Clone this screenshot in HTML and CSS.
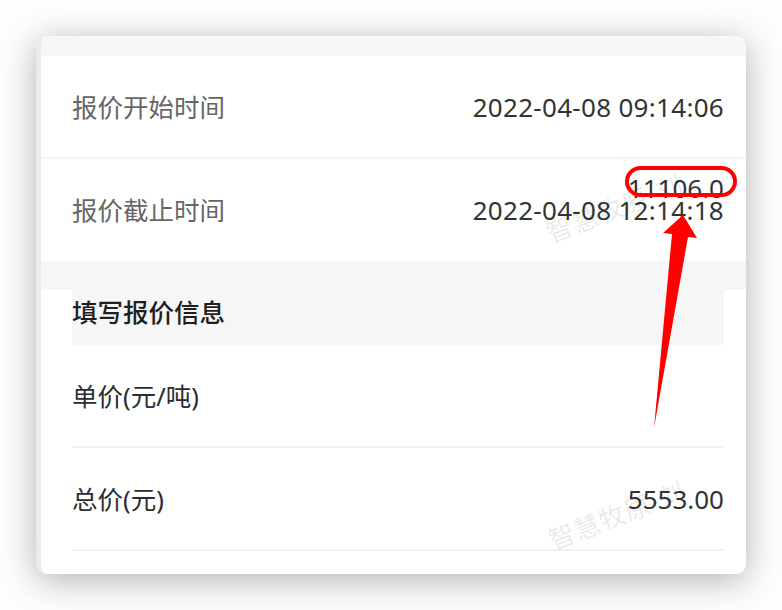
FILE: index.html
```html
<!DOCTYPE html>
<html lang="zh-CN">
<head>
<meta charset="utf-8">
<title>报价</title>
<link rel="stylesheet" href="styles.css">
</head>
<body>
<div class="stage">
  <div class="card">
    <div class="top-strip"></div>
    <div class="row">
      <span class="label muted">报价开始时间</span>
      <span class="value date">2022-04-08 09:14:06</span>
    </div>
    <div class="row row-last">
      <span class="label muted">报价截止时间</span>
      <span class="value date">2022-04-08 12:14:18</span>
      <span class="value overlap">11106.0</span>
    </div>
    <div class="gap"></div>
    <div class="form">
      <div class="form-header">填写报价信息</div>
      <div class="form-row">
        <span class="label">单价(元/吨)</span>
        <span class="value"></span>
      </div>
      <div class="form-row">
        <span class="label">总价(元)</span>
        <span class="value">5553.00</span>
      </div>
    </div>
    <div class="watermark wm-1">智慧牧原-刘</div>
    <div class="watermark wm-2">智慧牧原-刘</div>
  </div>
</div>
<svg class="annotation" width="782" height="610" viewBox="0 0 782 610" xmlns="http://www.w3.org/2000/svg">
  <rect x="627" y="168" width="108" height="27" rx="13.5" ry="13.5" fill="none" stroke="#ff0000" stroke-width="4"/>
  <polygon points="683,215 697,238 688,237 654,428 672,234 663,233" fill="#ff0000"/>
</svg>
</body>
</html>
```
FILE: styles.css
```css
html, body {
  margin: 0;
  padding: 0;
  background: #fdfdfd;
}
body {
  width: 782px;
  height: 610px;
  position: relative;
  overflow: hidden;
  font-family: "Noto Sans", "Noto Sans CJK SC", sans-serif;
}
.stage {
  padding: 36px 36px 0 36px;
}
.card {
  position: relative;
  width: 705px;
  height: 538px;
  background: #fff;
  border-left: 5px solid #ebebeb;
  border-radius: 10px;
  overflow: hidden;
  box-shadow: 0 6px 34px rgba(0, 0, 0, 0.3);
}
.top-strip {
  height: 20px;
  background: #f7f7f7;
}
.row {
  position: relative;
  height: 101px;
  display: flex;
  align-items: center;
  justify-content: space-between;
  padding: 0 22px 0 31px;
  border-bottom: 2px solid #f4f4f4;
}
.row-last {
  border-bottom: none;
  height: 102px;
}
.label {
  font-size: 25.5px;
  line-height: 26px;
  color: #2c2d33;
}
.label.muted {
  color: #666;
}
.value {
  font-size: 26px;
  line-height: 26px;
  color: #333;
}
.value.date {
  letter-spacing: 0.3px;
}
.overlap {
  position: absolute;
  right: 22px;
  top: 16px;
}
.gap {
  height: 29px;
  background: #f6f6f6;
}
.form {
  padding: 0 22px 0 31px;
}
.form-header {
  height: 46px;
  padding-top: 9px;
  background: #f6f6f6;
  font-size: 25.5px;
  line-height: 26px;
  font-weight: 500;
  color: #1f1f1f;
}
.form-row {
  height: 101px;
  display: flex;
  align-items: center;
  justify-content: space-between;
  border-bottom: 2px solid #f2f2f2;
}
.watermark {
  position: absolute;
  font-size: 26px;
  line-height: 26px;
  letter-spacing: 1px;
  color: rgba(0, 0, 0, 0.09);
  white-space: nowrap;
  transform: rotate(-21deg);
  transform-origin: left bottom;
  pointer-events: none;
}
.wm-1 {
  left: 511px;
  top: 184px;
}
.wm-2 {
  left: 513px;
  top: 491px;
}
.annotation {
  position: absolute;
  left: 0;
  top: 0;
  pointer-events: none;
}
```
